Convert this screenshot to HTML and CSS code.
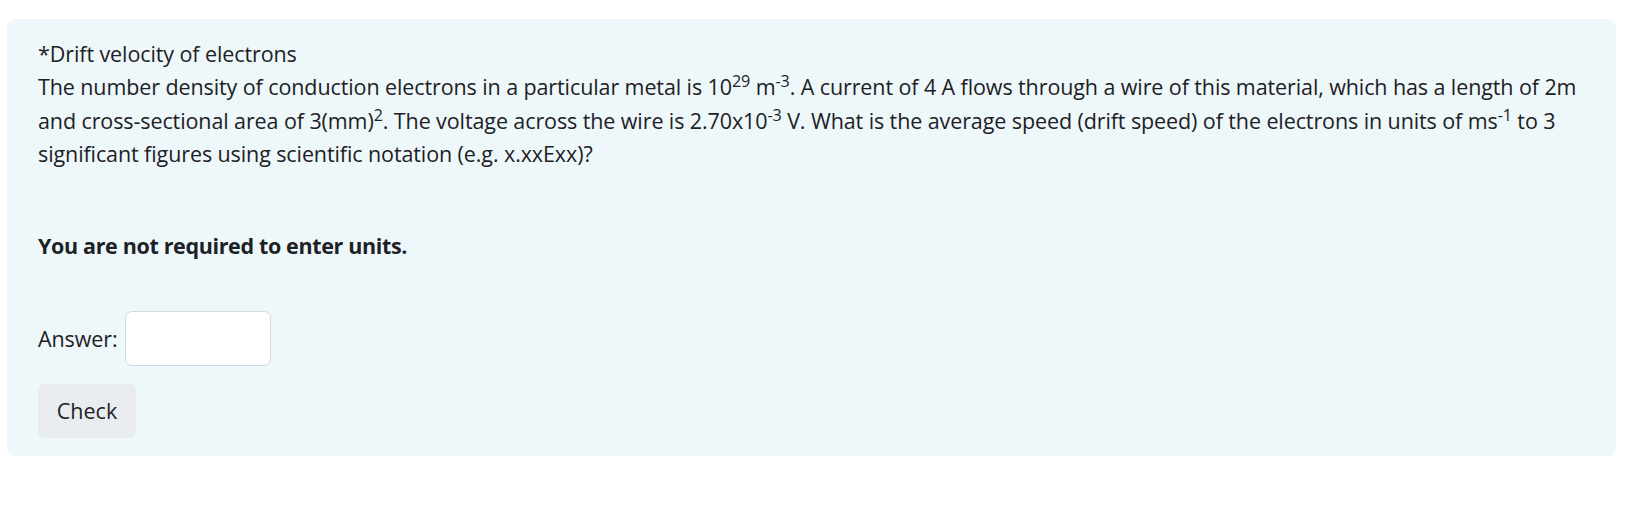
FILE: index.html
```html
<!DOCTYPE html>
<html lang="en">
<head>
<meta charset="utf-8">
<title>Drift velocity of electrons</title>
<link rel="stylesheet" href="styles.css">
</head>
<body>
<div class="page">
  <div class="formulation">
    <div class="qtext">
      <p class="intro">*Drift velocity of electrons<br>The number density of conduction electrons in a particular metal is 10<sup>29</sup> m<sup>-3</sup>. A current of 4 A flows through a wire of this material, which has a length of 2m and cross-sectional area of 3(mm)<sup>2</sup>. The voltage across the wire is 2.70x10<sup>-3</sup> V. What is the average speed (drift speed) of the electrons in units of ms<sup>-1</sup> to 3 significant figures using scientific notation (e.g. x.xxExx)?</p>
      <p class="note"><strong>You are not required to enter units.</strong></p>
    </div>
    <div class="ablock">
      <label class="alabel" for="answer">Answer:</label>
      <input class="ainput" id="answer" type="text">
    </div>
    <button class="btn-check" type="button">Check</button>
  </div>
</div>
</body>
</html>
```

FILE: styles.css
```css
html, body {
  margin: 0;
  padding: 0;
  background: #ffffff;
}

body {
  font-family: "Open Sans", "Noto Sans", "Liberation Sans", sans-serif;
  font-size: 21.5px;
  line-height: 33.4px;
  letter-spacing: -0.1px;
  color: #1d2125;
}

.page {
  padding: 19px 24px 0 7px;
}

.formulation {
  background: #eef7fa;
  border-radius: 9px;
  padding: 18px 30px 18px 31px;
  display: flex;
  flex-direction: column;
  align-items: flex-start;
}

.qtext p {
  margin: 0;
}

.note {
  padding-top: 58px;
}

.note strong {
  font-weight: 700;
  letter-spacing: -0.35px;
}

sup {
  font-size: 75%;
  line-height: 0;
  position: relative;
  top: -0.5em;
  vertical-align: baseline;
}

.ablock {
  display: flex;
  align-items: center;
  gap: 7px;
  margin-top: 49px;
}

.alabel {
  display: block;
}

.ainput {
  width: 146px;
  height: 55px;
  box-sizing: border-box;
  border: 1px solid #d3d9df;
  border-radius: 7px;
  background: #ffffff;
  font: inherit;
  padding: 0 10px;
}

.btn-check {
  margin-top: 18px;
  width: 98px;
  height: 54px;
  border: 0;
  border-radius: 7px;
  background: #e9ecef;
  color: #1d2125;
  font: inherit;
  padding: 0;
}
```
